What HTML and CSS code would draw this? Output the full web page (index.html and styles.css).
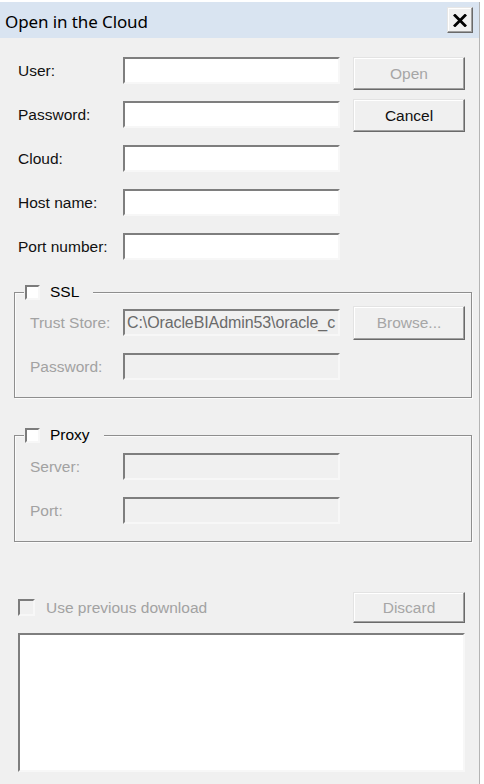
FILE: index.html
```html
<!DOCTYPE html>
<html lang="en">
<head>
<meta charset="utf-8">
<title>Open in the Cloud</title>
<link rel="stylesheet" href="styles.css">
</head>
<body>
<div class="window">
  <div class="titlebar">
    <span class="title">Open in the Cloud</span>
    <button class="close" type="button" aria-label="Close">
      <svg width="14" height="13" viewBox="0 0 14 13"><path d="M2 1.5 L12 11.5 M12 1.5 L2 11.5" stroke="#000" stroke-width="2.8" stroke-linecap="square"/></svg>
    </button>
  </div>
  <div class="content">
    <div class="row">
      <label class="label">User:</label>
      <input class="field" type="text">
      <button class="btn btn--disabled" type="button">Open</button>
    </div>
    <div class="row">
      <label class="label">Password:</label>
      <input class="field" type="password">
      <button class="btn btn--up" type="button">Cancel</button>
    </div>
    <div class="row">
      <label class="label">Cloud:</label>
      <input class="field" type="text">
    </div>
    <div class="row">
      <label class="label">Host name:</label>
      <input class="field" type="text">
    </div>
    <div class="row">
      <label class="label">Port number:</label>
      <input class="field" type="text">
    </div>

    <div class="group group--ssl">
      <div class="legend"><span class="check"></span><span class="legend-text">SSL</span></div>
      <div class="row">
        <label class="label label--group label--disabled">Trust Store:</label>
        <div class="field field--disabled field--text">C:\OracleBIAdmin53\oracle_c</div>
        <button class="btn btn--disabled btn--up3" type="button">Browse...</button>
      </div>
      <div class="row">
        <label class="label label--group label--disabled">Password:</label>
        <div class="field field--disabled"></div>
      </div>
    </div>

    <div class="group group--proxy">
      <div class="legend"><span class="check"></span><span class="legend-text">Proxy</span></div>
      <div class="row">
        <label class="label label--group label--disabled">Server:</label>
        <div class="field field--disabled"></div>
      </div>
      <div class="row">
        <label class="label label--group label--disabled">Port:</label>
        <div class="field field--disabled"></div>
      </div>
    </div>

    <div class="bottom-row">
      <div class="option">
        <span class="check check--disabled"></span>
        <span class="option-text">Use previous download</span>
      </div>
      <button class="btn btn--disabled btn--short" type="button">Discard</button>
    </div>
    <div class="log"></div>
  </div>
</div>
</body>
</html>
```

FILE: styles.css
```css
* { box-sizing: border-box; }

html, body {
  margin: 0;
  padding: 0;
  background: #ffffff;
}

body {
  font-family: "Liberation Sans", Arial, sans-serif;
  font-size: 15.5px;
  color: #111111;
}

.window {
  width: 480px;
  height: 782px;
  margin-top: 2px;
  background: #f0f0f0;
  border-right: 1px solid #b4b4b4;
  overflow: hidden;
}

.titlebar {
  height: 36px;
  background: #d9e4f1;
  display: flex;
  align-items: center;
  justify-content: space-between;
  padding: 0 6px 0 5px;
}

.title {
  font-family: "Noto Sans", "Open Sans", sans-serif;
  font-size: 17px;
  color: #000;
  letter-spacing: -0.1px;
  padding-top: 2px;
}

.close {
  width: 26px;
  height: 26px;
  padding: 0;
  margin: 0;
  display: flex;
  align-items: center;
  justify-content: center;
  background: #f0f0f0;
  border: 1px solid;
  border-color: #e6e6e6 #6a6a6a #6a6a6a #e6e6e6;
  box-shadow: inset -1px -1px 0 #a0a0a0, inset 1px 1px 0 #ffffff;
}

.content {
  padding: 19px 0 0 14px;
}

.row {
  display: flex;
  align-items: flex-start;
  height: 44px;
}

.label {
  width: 105px;
  margin-left: 4px;
  line-height: 27px;
  white-space: nowrap;
}

.label--group {
  width: 93px;
  margin-left: 15px;
}

.label--disabled {
  color: #a2a2a2;
}

.field {
  width: 217px;
  height: 27px;
  margin: 0;
  padding: 0 3px;
  background: #ffffff;
  border: 2px solid;
  border-color: #7e7e7e #f7f7f7 #f7f7f7 #7e7e7e;
  font: inherit;
  outline: none;
}

.field--disabled {
  background: #f0f0f0;
}

.field--text {
  line-height: 23px;
  font-size: 16px;
  color: #6a6a6a;
  white-space: nowrap;
  overflow: hidden;
  padding: 0 0 0 2px;
  letter-spacing: -0.1px;
}

.btn {
  width: 112px;
  height: 33px;
  margin: 0 0 0 13px;
  padding: 0;
  background: #f0f0f0;
  border: 1px solid;
  border-color: #e3e3e3 #6a6a6a #6a6a6a #e3e3e3;
  box-shadow: inset -1px -1px 0 #a0a0a0, inset 1px 1px 0 #ffffff;
  font-family: "Liberation Sans", Arial, sans-serif;
  font-size: 15.5px;
  color: #111;
}

.btn--disabled {
  color: #a6a6a6;
}

.btn--up {
  margin-top: -2px;
}

.btn--up3 {
  margin-top: -3px;
  height: 34px;
}

.btn--short {
  height: 31px;
  margin: 0;
}

.group {
  position: relative;
  width: 458px;
  border: 1px solid #8e8e8e;
  box-shadow: inset 1px 1px 0 #fbfbfb, 1px 1px 0 #fbfbfb;
}

.group--ssl {
  margin-top: 15px;
  padding-top: 16px;
}

.group--proxy {
  margin-top: 37px;
  padding-top: 17px;
}

.legend {
  position: absolute;
  top: -9px;
  left: 9px;
  height: 16px;
  display: flex;
  align-items: center;
  padding: 0 14px 0 1px;
  background: #f0f0f0;
}

.legend-text {
  margin-left: 10px;
  color: #000;
}

.check {
  display: block;
  width: 15px;
  height: 15px;
  background: #ffffff;
  border: 2px solid;
  border-color: #7c7c7c #f7f7f7 #f7f7f7 #7c7c7c;
}

.check--disabled {
  width: 17px;
  height: 17px;
  background: #f0f0f0;
}

.bottom-row {
  display: flex;
  align-items: center;
  justify-content: space-between;
  width: 447px;
  margin: 50px 0 0 4px;
}

.option {
  display: flex;
  align-items: center;
}

.option-text {
  margin-left: 11px;
  color: #a2a2a2;
}

.log {
  width: 447px;
  height: 139px;
  margin: 10px 0 0 4px;
  background: #ffffff;
  border: 2px solid;
  border-color: #7e7e7e #f7f7f7 #f7f7f7 #7e7e7e;
}
```
